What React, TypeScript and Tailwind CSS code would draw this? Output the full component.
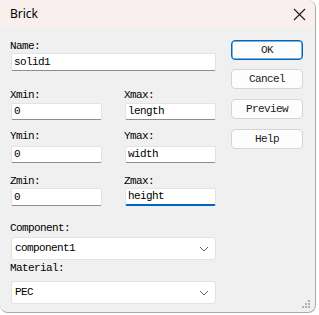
import React from 'react';

const mono = { fontFamily: '"Liberation Mono", "DejaVu Sans Mono", monospace' };

const Label: React.FC<{ text: string; className?: string }> = ({ text, className }) => (
  <div className={`h-[14px] leading-[14px] text-[11px] tracking-[-0.6px] text-black ${className || ''}`}>{text}</div>
);

const TextBox: React.FC<{ value: string; w: string; h: string; focused?: boolean; className?: string }> = ({ value, w, h, focused, className }) => (
  <div
    className={`${w} ${h} bg-white border border-[#e3e3e3] rounded-[2px] flex items-center pl-[2px] text-[11px] tracking-[-0.6px] text-black ${
      focused ? 'border-b-2 border-b-[#0067c0]' : 'border-b-[#8c8c8c]'
    } ${className || ''}`}
  >
    {value}
  </div>
);

const Combo: React.FC<{ value: string; className?: string }> = ({ value, className }) => (
  <div className={`w-[205px] h-[23px] bg-white border border-[#e3e3e3] rounded-[3px] flex items-center justify-between pl-[3px] pr-[6px] ${className || ''}`}>
    <span className="text-[11px] tracking-[-0.6px] text-black">{value}</span>
    <svg width="10" height="6" viewBox="0 0 10 6" fill="none" stroke="#606060" strokeWidth="1">
      <path d="M1 1l4 4 4-4" />
    </svg>
  </div>
);

const Btn: React.FC<{ text: string; primary?: boolean; className?: string }> = ({ text, primary, className }) => (
  <div
    className={`w-[72px] h-[20px] rounded-[4px] bg-[#fdfdfd] flex items-center justify-center text-[11px] tracking-[-0.6px] text-[#1b1b1b] ${
      primary ? 'border border-[#0067c0] shadow-[inset_0_0_0_0.5px_#0067c0]' : 'border border-[#d5d5d5]'
    } ${className || ''}`}
  >
    {text}
  </div>
);

export default function App() {
  return (
    <div className="w-[319px] h-[315px] bg-white overflow-hidden">
      <div className="w-[316px] h-[313px] bg-[#f0f0f0] rounded-tr-[8px] rounded-b-[8px] border-r border-b border-[#a9a9a9] flex flex-col relative">
        <div className="h-[28px] bg-[#f9efee] rounded-tr-[8px] flex items-center justify-between pl-[10px] pr-[9px] shrink-0">
          <span className="text-[12px] text-black" style={{ fontFamily: '"Noto Sans", "Open Sans", sans-serif' }}>Brick</span>
          <svg width="13" height="13" viewBox="0 0 13 13" stroke="#1a1a1a" strokeWidth="1.1" fill="none">
            <path d="M1 1l11 11M12 1L1 12" />
          </svg>
        </div>

        <div className="flex" style={mono}>
          <div className="pl-[10px] w-[221px]">
            <Label text="Name:" className="mt-[11px]" />
            <TextBox value="solid1" w="w-[205px]" h="h-[18px]" className="ml-px" />

            <div className="flex mt-[17px]">
              <div className="w-[114px]">
                <Label text="Xmin:" />
                <TextBox value="0" w="w-[91px]" h="h-[17px]" className="ml-px mt-px" />
              </div>
              <div>
                <Label text="Xmax:" />
                <TextBox value="length" w="w-[91px]" h="h-[17px]" className="ml-px mt-px" />
              </div>
            </div>

            <div className="flex mt-[9px]">
              <div className="w-[114px]">
                <Label text="Ymin:" />
                <TextBox value="0" w="w-[91px]" h="h-[17px]" className="ml-px mt-[3px]" />
              </div>
              <div>
                <Label text="Ymax:" />
                <TextBox value="width" w="w-[91px]" h="h-[17px]" className="ml-px mt-[3px]" />
              </div>
            </div>

            <div className="flex mt-[11px]">
              <div className="w-[114px]">
                <Label text="Zmin:" />
                <TextBox value="0" w="w-[91px]" h="h-[18px]" className="ml-px" />
              </div>
              <div>
                <Label text="Zmax:" />
                <TextBox value="height" w="w-[91px]" h="h-[18px]" focused className="ml-px" />
              </div>
            </div>

            <Label text="Component:" className="mt-[15px]" />
            <Combo value="component1" className="ml-px mt-[2px]" />
            <Label text="Material:" className="mt-px" />
            <Combo value="PEC" className="ml-px mt-[6px]" />
          </div>

          <div className="pl-[10px] pt-[12px] flex flex-col gap-[9px]">
            <Btn text="OK" primary />
            <Btn text="Cancel" />
            <Btn text="Preview" className="mt-px" />
            <Btn text="Help" className="mt-px" />
          </div>
        </div>

        <svg className="absolute right-[4px] bottom-[3px]" width="9" height="9" viewBox="0 0 9 9" fill="#b0b0b0">
          <rect x="6" y="0" width="2" height="2" />
          <rect x="3" y="3" width="2" height="2" />
          <rect x="6" y="3" width="2" height="2" />
          <rect x="0" y="6" width="2" height="2" />
          <rect x="3" y="6" width="2" height="2" />
          <rect x="6" y="6" width="2" height="2" />
        </svg>
      </div>
    </div>
  );
}
